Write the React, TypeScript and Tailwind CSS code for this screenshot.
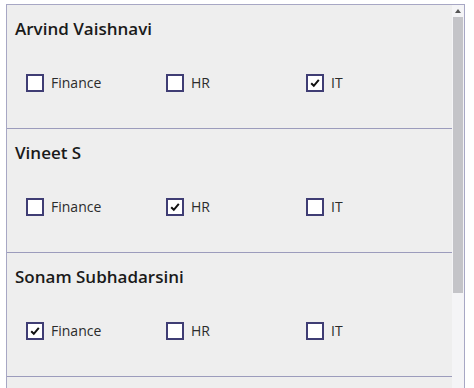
import React from "react";

const rows = [
  { name: "Arvind Vaishnavi", checked: "IT" },
  { name: "Vineet S", checked: "HR" },
  { name: "Sonam Subhadarsini", checked: "Finance" },
];

const depts = ["Finance", "HR", "IT"];

function Box(props: { on: boolean }) {
  return (
    <span className="w-[18px] h-[18px] border-2 border-[#3f3d74] bg-white flex items-center justify-center shrink-0">
      {props.on && (
        <svg width="12" height="12" viewBox="0 0 12 12">
          <path d="M2.2 6.2 L4.8 8.8 L9.8 2.8" fill="none" stroke="#111" strokeWidth="2" />
        </svg>
      )}
    </span>
  );
}

export default function App() {
  return (
    <div className="w-[474px] h-[388px] bg-white overflow-hidden pt-[4px] pl-[6px]" style={{ fontFamily: '"Open Sans", "Noto Sans", sans-serif' }}>
      <div className="w-[459px] h-[400px] border border-[#a7a7c4] bg-[#eeeeee] flex">
        <div className="flex-1">
          {rows.map((r) => (
            <div key={r.name} className="h-[124px] border-b border-[#9c9cbc] pl-[8px] pt-[12px]">
              <div className="text-[17px] leading-[23px] font-semibold text-[#1a1a1a]">{r.name}</div>
              <div className="flex pl-[11px] mt-[34px]">
                {depts.map((d) => (
                  <label key={d} className="w-[140px] flex items-center gap-[7px]">
                    <Box on={r.checked === d} />
                    <span className="text-[14px] leading-[18px] text-[#2b2b2b]">{d}</span>
                  </label>
                ))}
              </div>
            </div>
          ))}
        </div>
        <div className="w-[12px] bg-[#f4f4f6] flex flex-col items-center">
          <div className="h-[12px] flex items-center justify-center">
            <svg width="6" height="4" viewBox="0 0 6 4">
              <path d="M0 4 L3 0 L6 4 Z" fill="#555" />
            </svg>
          </div>
          <div className="w-[10px] h-[276px] bg-[#c4c4c8]" />
        </div>
      </div>
    </div>
  );
}
